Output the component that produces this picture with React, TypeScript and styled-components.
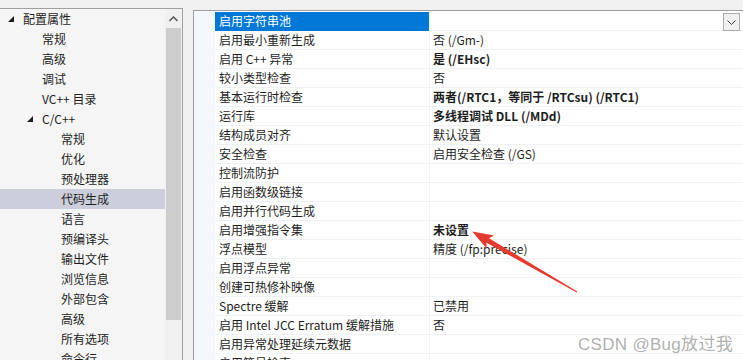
import React from "react";
import styled, { createGlobalStyle } from "styled-components";

interface TreeItem {
  label: string;
  level: number;
  expanded?: boolean;
  selected?: boolean;
}

interface PropItem {
  name: string;
  value?: string;
  bold?: boolean;
}

const treeItems: TreeItem[] = [
  { label: "配置属性", level: 0, expanded: true },
  { label: "常规", level: 1 },
  { label: "高级", level: 1 },
  { label: "调试", level: 1 },
  { label: "VC++ 目录", level: 1 },
  { label: "C/C++", level: 1, expanded: true },
  { label: "常规", level: 2 },
  { label: "优化", level: 2 },
  { label: "预处理器", level: 2 },
  { label: "代码生成", level: 2, selected: true },
  { label: "语言", level: 2 },
  { label: "预编译头", level: 2 },
  { label: "输出文件", level: 2 },
  { label: "浏览信息", level: 2 },
  { label: "外部包含", level: 2 },
  { label: "高级", level: 2 },
  { label: "所有选项", level: 2 },
  { label: "命令行", level: 2 },
];

const props: PropItem[] = [
  { name: "启用最小重新生成", value: "否 (/Gm-)" },
  { name: "启用 C++ 异常", value: "是 (/EHsc)", bold: true },
  { name: "较小类型检查", value: "否" },
  { name: "基本运行时检查", value: "两者(/RTC1，等同于 /RTCsu) (/RTC1)", bold: true },
  { name: "运行库", value: "多线程调试 DLL (/MDd)", bold: true },
  { name: "结构成员对齐", value: "默认设置" },
  { name: "安全检查", value: "启用安全检查 (/GS)" },
  { name: "控制流防护" },
  { name: "启用函数级链接" },
  { name: "启用并行代码生成" },
  { name: "启用增强指令集", value: "未设置", bold: true },
  { name: "浮点模型", value: "精度 (/fp:precise)" },
  { name: "启用浮点异常" },
  { name: "创建可热修补映像" },
  { name: "Spectre 缓解", value: "已禁用" },
  { name: "启用 Intel JCC Erratum 缓解措施", value: "否" },
  { name: "启用异常处理延续元数据" },
  { name: "启用符号检索" },
];

const GlobalStyle = createGlobalStyle`
  html, body {
    margin: 0;
    padding: 0;
    background: #f0f0f0;
    overflow: hidden;
  }
  body {
    font-family: "Noto Sans CJK SC", "Liberation Sans", sans-serif;
    font-size: 12px;
    color: #1e1e1e;
  }
`;

const Window = styled.div`
  position: relative;
  width: 743px;
  height: 360px;
  display: flex;
  gap: 10px;
  overflow: hidden;
`;

const TreePanel = styled.div`
  margin-top: 8px;
  width: 183px;
  height: 400px;
  flex-shrink: 0;
  display: flex;
  background: #f5f5f5;
  border-top: 1px solid #a0a0a0;
  border-right: 1px solid #a0a0a0;
  box-sizing: border-box;
`;

const TreeList = styled.div`
  flex: 1;
  display: flex;
  flex-direction: column;
`;

const TreeRow = styled.div<{ $level: number; $selected?: boolean }>`
  position: relative;
  height: 20px;
  line-height: 20px;
  padding-left: ${(p) => 23 + p.$level * 19}px;
  background: ${(p) => (p.$selected ? "#cccedb" : "transparent")};
  white-space: nowrap;
`;

const Expander = styled.svg`
  position: absolute;
  top: 7px;
  width: 6px;
  height: 6px;
`;

const ScrollBar = styled.div`
  width: 17px;
  display: flex;
  flex-direction: column;
  align-items: center;
  background: #f0f0f0;
`;

const ScrollArrow = styled.div`
  height: 19px;
  width: 100%;
  display: flex;
  align-items: center;
  justify-content: center;
`;

const ScrollThumb = styled.div`
  width: 15px;
  height: 292px;
  background: #cdcdcd;
`;

const GridPanel = styled.div`
  margin-top: 10px;
  flex: 1;
  display: flex;
  background: #ffffff;
  border-top: 1px solid #a0a0a0;
  border-left: 1px solid #a0a0a0;
`;

const Gutter = styled.div`
  width: 21px;
  flex-shrink: 0;
  background: #f4f7fc;
`;

const Grid = styled.div`
  flex: 1;
  padding-top: 1px;
  display: flex;
  flex-direction: column;
`;

const GridRow = styled.div`
  display: grid;
  grid-template-columns: 215px 1fr;
  height: 19px;
  box-sizing: border-box;
  border-bottom: 1px solid #eef1f6;
  white-space: nowrap;
`;

const NameCell = styled.div<{ $selected?: boolean }>`
  padding-left: 4px;
  line-height: 18px;
  border-right: 1px solid #eef1f6;
  background: ${(p) => (p.$selected ? "#0078d7" : "transparent")};
  color: ${(p) => (p.$selected ? "#ffffff" : "#1e1e1e")};
`;

const ValueCell = styled.div<{ $bold?: boolean }>`
  display: flex;
  align-items: center;
  justify-content: space-between;
  padding-left: 3px;
  padding-right: 3px;
  line-height: 18px;
  font-weight: ${(p) => (p.$bold ? 700 : 400)};
`;

const DropButton = styled.div`
  width: 15px;
  height: 16px;
  margin-top: 1px;
  border: 1px solid #adadad;
  background: #f0f0f0;
  display: flex;
  align-items: center;
  justify-content: center;
`;

const Arrow = styled.svg`
  position: absolute;
  left: 0;
  top: 0;
  pointer-events: none;
`;

const Watermark = styled.div`
  position: absolute;
  left: 578px;
  top: 330px;
  font-family: "Liberation Sans", "Noto Sans CJK SC", sans-serif;
  font-size: 17px;
  letter-spacing: 0.3px;
  color: rgba(140, 140, 140, 0.7);
  text-shadow: 0 0 1px #ffffff;
  white-space: nowrap;
`;

const App: React.FC = () => {
  return (
    <>
      <GlobalStyle />
      <Window>
        <TreePanel>
          <TreeList>
            {treeItems.map((item, i) => (
              <TreeRow key={i} $level={item.level} $selected={item.selected}>
                {item.expanded && (
                  <Expander
                    viewBox="0 0 6 6"
                    style={{ left: 8 + item.level * 19 }}
                  >
                    <polygon points="6,0 6,6 0,6" fill="#1e1e1e" />
                  </Expander>
                )}
                {item.label}
              </TreeRow>
            ))}
          </TreeList>
          <ScrollBar>
            <ScrollArrow>
              <svg width="9" height="6" viewBox="0 0 9 6">
                <polyline
                  points="0.5,5 4.5,1 8.5,5"
                  fill="none"
                  stroke="#606060"
                  strokeWidth="1.6"
                />
              </svg>
            </ScrollArrow>
            <ScrollThumb />
          </ScrollBar>
        </TreePanel>

        <GridPanel>
          <Gutter />
          <Grid>
            <GridRow>
              <NameCell $selected>启用字符串池</NameCell>
              <ValueCell>
                <span />
                <DropButton>
                  <svg width="9" height="5" viewBox="0 0 9 5">
                    <polyline
                      points="0.5,0.5 4.5,4.5 8.5,0.5"
                      fill="none"
                      stroke="#404040"
                      strokeWidth="1"
                    />
                  </svg>
                </DropButton>
              </ValueCell>
            </GridRow>
            {props.map((p, i) => (
              <GridRow key={i}>
                <NameCell>{p.name}</NameCell>
                <ValueCell $bold={p.bold}>{p.value}</ValueCell>
              </GridRow>
            ))}
          </Grid>
        </GridPanel>

        <Arrow width="743" height="360">
          <g transform="translate(577,292) rotate(210)">
            <polygon
              points="0,-0.5 103,-2.6 100,-7.5 121,0 100,7.5 103,2.6 0,0.5"
              fill="#e53a2e"
            />
          </g>
        </Arrow>
        <Watermark>CSDN @Bug放过我</Watermark>
      </Window>
    </>
  );
};

export default App;
